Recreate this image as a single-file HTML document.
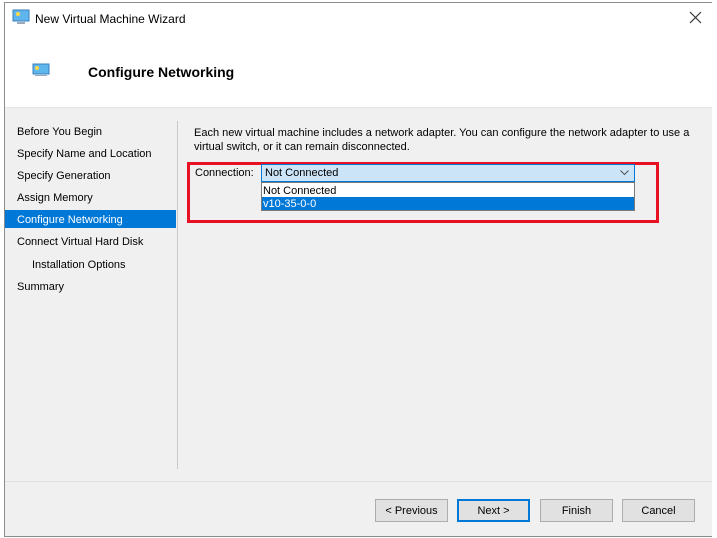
<!DOCTYPE html>
<html><head><style>
*{margin:0;padding:0;box-sizing:border-box}
body{width:717px;height:538px;background:#fff;font-family:"Liberation Sans",sans-serif;font-size:11px;color:#000;position:relative;overflow:hidden}
.a{position:absolute}
.nav{position:absolute;left:17px;font-size:11px}
.btn{position:absolute;top:499px;height:23px;width:73px;background:#e1e1e1;border:1px solid #adadad;text-align:center;line-height:23px;font-size:11px}
</style></head><body>
<div class="a" style="left:4px;top:2px;width:708px;height:535px;border:1px solid #8c8c8c;border-right:none;background:#f0f0f0"></div>
<div class="a" style="left:5px;top:3px;width:707px;height:105px;background:#fff"></div>
<div class="a" style="left:5px;top:107px;width:707px;height:1px;background:#e6e6e6"></div>
<div class="a" style="left:4px;top:536px;width:708px;height:1px;background:#8c8c8c"></div>
<svg class="a" style="left:12px;top:9px" width="18" height="16"><rect x="1" y="1" width="16" height="11" fill="#5fb6ec" stroke="#3a7fc0"/><circle cx="6" cy="5" r="2" fill="#ffd84a"/><rect x="5" y="13" width="8" height="2" fill="#9ab"/></svg>
<div class="a" style="left:35px;top:12px;font-size:12px">New Virtual Machine Wizard</div>
<svg class="a" style="left:689px;top:11px" width="13" height="13"><path d="M1 1L12 12M12 1L1 12" stroke="#333" stroke-width="1.2"/></svg>
<svg class="a" style="left:32px;top:63px" width="18" height="16"><rect x="1" y="1" width="16" height="10" fill="#5fb6ec" stroke="#3a7fc0"/><circle cx="5" cy="5" r="2" fill="#ffd84a"/><rect x="3" y="12" width="12" height="1" fill="#9ab"/></svg>
<div class="a" style="left:88px;top:64px;font-size:14px;font-weight:bold">Configure Networking</div>
<div class="nav" style="top:126px">Before You Begin</div>
<div class="nav" style="top:148px">Specify Name and Location</div>
<div class="nav" style="top:170px">Specify Generation</div>
<div class="nav" style="top:192px">Assign Memory</div>
<div class="a" style="left:5px;top:210px;width:171px;height:18px;background:#0078d7"></div>
<div class="nav" style="top:214px;color:#fff">Configure Networking</div>
<div class="nav" style="top:236px">Connect Virtual Hard Disk</div>
<div class="nav" style="left:32px;top:259px">Installation Options</div>
<div class="nav" style="top:281px">Summary</div>
<div class="a" style="left:177px;top:121px;width:1px;height:348px;background:#c8c8c8"></div>
<div class="a" style="left:194px;top:126px;width:505px;line-height:14px">Each new virtual machine includes a network adapter. You can configure the network adapter to use a virtual switch, or it can remain disconnected.</div>
<div class="a" style="left:187px;top:162px;width:472px;height:61px;border:3px solid #e81123"></div>
<div class="a" style="left:195px;top:167px">Connection:</div>
<div class="a" style="left:261px;top:164px;width:374px;height:18px;background:#cce4f7;border:1px solid #0078d7;padding-left:3px;line-height:17px">Not Connected<svg style="position:absolute;right:5px;top:5px" width="9" height="6"><path d="M0.5 0.5L4.5 4.5L8.5 0.5" stroke="#555" fill="none"/></svg></div>
<div class="a" style="left:261px;top:182px;width:374px;height:29px;background:#fff;border:1px solid #7a7a7a"></div>
<div class="a" style="left:263px;top:185px;line-height:13px">Not Connected</div>
<div class="a" style="left:262px;top:197px;width:372px;height:13px;background:#0078d7;color:#fff;padding-left:1px;line-height:14px">v10-35-0-0</div>
<div class="a" style="left:5px;top:481px;width:707px;height:1px;background:#e0e0e0"></div>
<div class="btn" style="left:375px">&lt; Previous</div>
<div class="btn" style="left:457px;border:2px solid #0078d7;line-height:21px">Next &gt;</div>
<div class="btn" style="left:540px">Finish</div>
<div class="btn" style="left:622px">Cancel</div>
</body></html>
